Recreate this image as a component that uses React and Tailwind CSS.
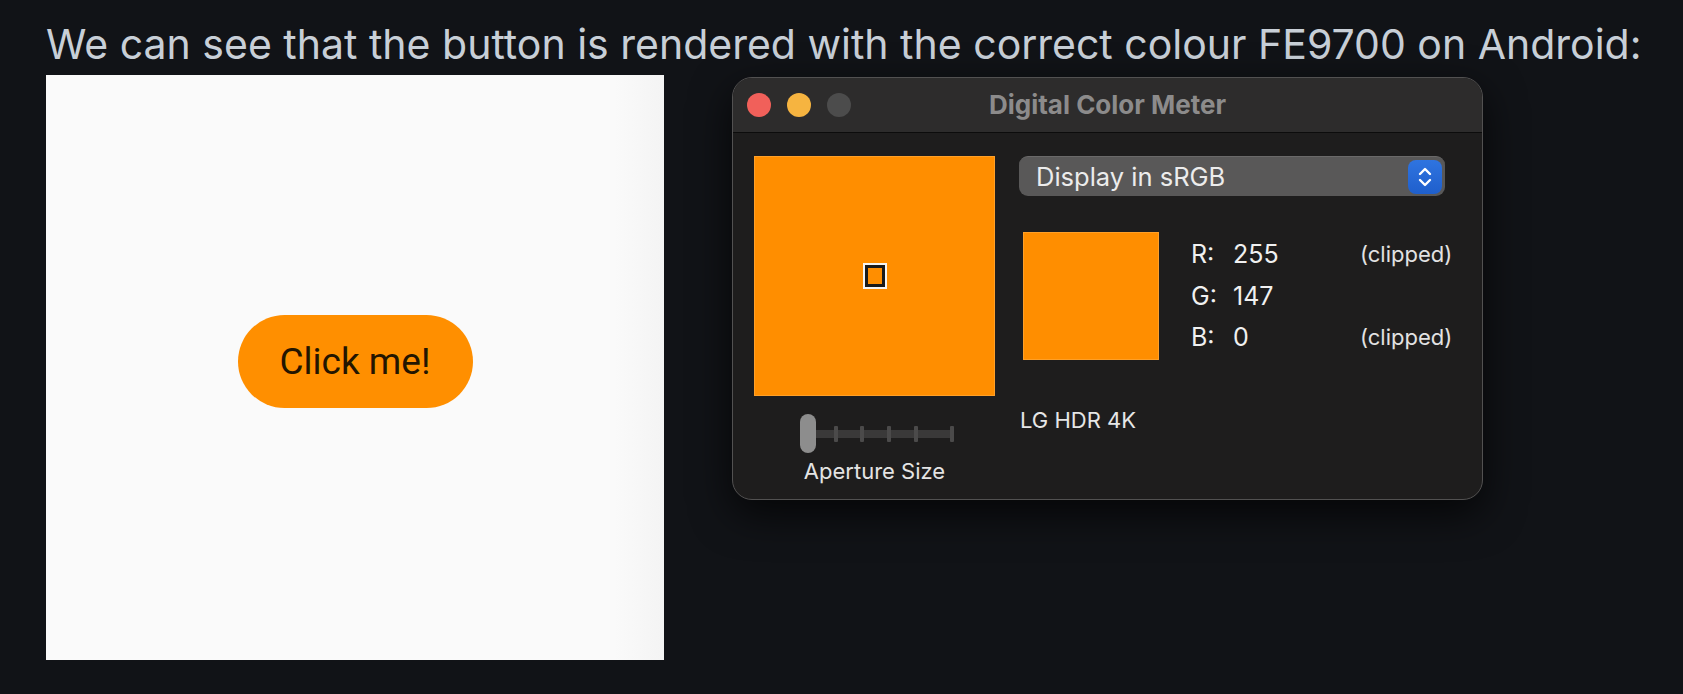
import React from "react";

const mac = { fontFamily: "Inter, 'Noto Sans', sans-serif" };
const android = { fontFamily: "Roboto, 'Noto Sans', sans-serif" };

const ticks = [18, 44, 71, 98, 134];

function ApertureSlider() {
  return (
    <div className="flex items-center w-[152px] h-[39px]">
      <div className="w-[16px] h-[39px] rounded-full bg-[#8d8d8d] shrink-0" />
      <div className="relative w-[138px] h-[8px] bg-[#3a3939]">
        {ticks.map((x) => (
          <div key={x} className="absolute top-[-4px] w-[4px] h-[16px] rounded-[1px] bg-[#4b4a4a]" style={{ left: x }} />
        ))}
      </div>
    </div>
  );
}

function ColorMeter() {
  return (
    <div style={mac} className="w-[751px] h-[423px] ml-[68px] mt-[2px] rounded-[20px] border border-[#525151] bg-[#1e1d1d] overflow-hidden shadow-[0_14px_40px_rgba(0,0,0,0.7)]">
      {/* title bar */}
      <div className="grid grid-cols-[1fr_auto_1fr] items-center h-[55px] bg-[#2d2c2c] border-b border-[#0c0c0c] px-[14px]">
        <div className="flex gap-[16px]">
          <div className="w-[24px] h-[24px] rounded-full bg-[#f1605a]" />
          <div className="w-[24px] h-[24px] rounded-full bg-[#f6b440]" />
          <div className="w-[24px] h-[24px] rounded-full bg-[#4c4c4c]" />
        </div>
        <div className="text-[26px] font-bold text-[#8c8b8b] leading-none">Digital Color Meter</div>
        <div />
      </div>

      <div className="flex pl-[21px] pt-[23px]">
        {/* left column */}
        <div className="flex flex-col items-center w-[241px] shrink-0">
          <div className="w-[241px] h-[240px] bg-[#ff8e00] border border-[#ffa028] flex items-center justify-center">
            <div className="w-[24px] h-[26px] border-2 border-[#f4f4f4]">
              <div className="w-full h-full border-[3px] border-[#1a1a1a] bg-[#ff8e00]" />
            </div>
          </div>
          <div className="mt-[18px] ml-[2px]">
            <ApertureSlider />
          </div>
          <div className="mt-[5px] text-[22px] leading-[27px] text-[#e4e4e4]">Aperture Size</div>
        </div>

        {/* right column */}
        <div className="ml-[24px] w-[426px] shrink-0">
          <div className="flex items-center justify-between h-[40px] rounded-[9px] bg-[#595858] border-t border-[#6a6969] pl-[17px] pr-[3px]">
            <span className="text-[25.5px] text-[#ececec] leading-none">Display in sRGB</span>
            <div className="w-[34px] h-[34px] rounded-[8px] bg-[linear-gradient(#2f74e0,#1f5fcc)] flex items-center justify-center">
              <svg width="16" height="24" viewBox="0 0 16 24" fill="none" stroke="#ffffff" strokeWidth="2.4" strokeLinecap="round" strokeLinejoin="round">
                <path d="M3 9 L8 4 L13 9" />
                <path d="M3 15 L8 20 L13 15" />
              </svg>
            </div>
          </div>

          <div className="flex mt-[36px] ml-[4px]">
            <div className="w-[136px] h-[128px] shrink-0 bg-[#ff8e00] border border-[#ffa028]" />
            <div className="ml-[32px] mt-[2px] shrink-0 grid grid-cols-[42px_127px_auto] auto-rows-[41.5px] items-center text-[25px] text-[#f0f0f0] whitespace-nowrap">
              <span>R:</span>
              <span>255</span>
              <span className="text-[22px] text-[#e2e2e2]">(clipped)</span>
              <span>G:</span>
              <span>147</span>
              <span />
              <span>B:</span>
              <span>0</span>
              <span className="text-[22px] text-[#e2e2e2]">(clipped)</span>
            </div>
          </div>

          <div className="mt-[47px] ml-[1px] text-[22px] leading-[26px] text-[#e6e6e6]">LG HDR 4K</div>
        </div>
      </div>
    </div>
  );
}

export default function App() {
  return (
    <div className="w-[1683px] h-[694px] bg-[#111317] pl-[46px] pt-[20px] overflow-hidden">
      <h1 style={mac} className="text-[41px] leading-[48px] font-normal text-[#c8cfd7] whitespace-nowrap">
        We can see that the button is rendered with the correct colour FE9700 on Android:
      </h1>

      <div className="flex items-start mt-[7px]">
        <div className="w-[618px] h-[585px] shrink-0 bg-[linear-gradient(to_right,#fafafa_92%,#f4f4f4)] flex items-center justify-center pb-[12px]">
          <button
            style={android}
            className="w-[235px] h-[93px] rounded-full bg-[#ff8f00] text-[37px] font-normal text-[#231500] leading-none"
          >
            Click me!
          </button>
        </div>
        <ColorMeter />
      </div>
    </div>
  );
}
